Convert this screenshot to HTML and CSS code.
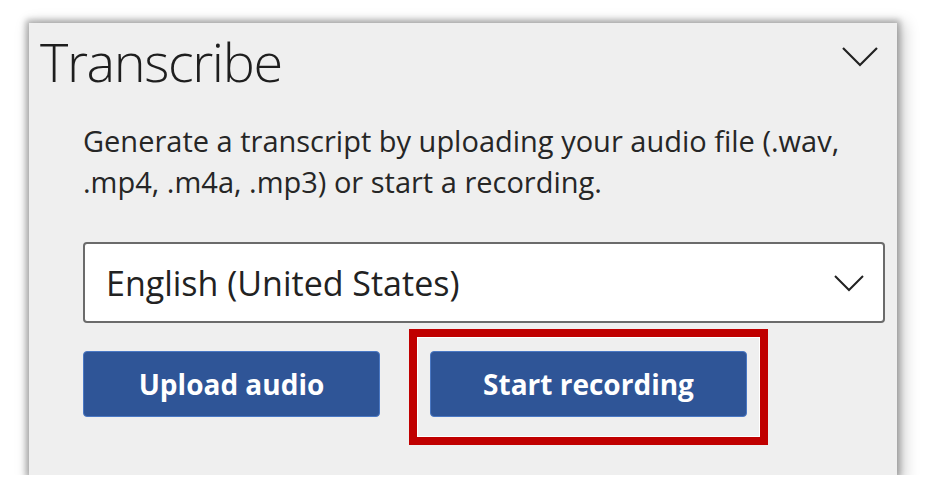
FILE: index.html
```html
<!DOCTYPE html>
<html lang="en">
<head>
<meta charset="utf-8">
<title>Transcribe</title>
<link rel="stylesheet" href="styles.css">
</head>
<body>
<div class="panel">
  <div class="header">
    <h1 class="title">Transcribe</h1>
    <svg class="collapse" width="38" height="22" viewBox="0 0 38 22"><path d="M2 2 L19 19 L36 2" fill="none" stroke="#222" stroke-width="2.2"/></svg>
  </div>
  <div class="content">
    <p class="desc">Generate a transcript by uploading your audio file (.wav, .mp4, .m4a, .mp3) or start a recording.</p>
    <div class="select">
      <span class="select-text">English (United States)</span>
      <svg class="select-chev" width="32" height="18" viewBox="0 0 32 18"><path d="M2 2 L16 16 L30 2" fill="none" stroke="#222" stroke-width="2"/></svg>
    </div>
    <div class="actions">
      <button class="btn btn-up">Upload audio</button>
      <div class="highlight">
        <button class="btn btn-rec">Start recording</button>
      </div>
    </div>
  </div>
</div>
</body>
</html>
```

FILE: styles.css
```css
html, body {
  margin: 0;
  padding: 0;
  background: #ffffff;
}
body {
  padding: 23px 0 0 29px;
  font-family: "Open Sans", "Noto Sans", sans-serif;
  color: #262626;
}
.panel {
  width: 868px;
  height: 452px;
  box-sizing: border-box;
  background: #efefef;
  box-shadow: 0 0 6px 3px rgba(0,0,0,0.28), 4px 4px 14px 4px rgba(0,0,0,0.18);
  padding: 0 0 0 11px;
}
.header {
  display: flex;
  justify-content: space-between;
  align-items: flex-start;
  height: 93px;
}
.title {
  margin: 0;
  font-weight: 300;
  font-size: 54px;
  line-height: 76px;
  letter-spacing: -1.4px;
  color: #1e1e1e;
}
.collapse {
  margin: 23px 18px 0 0;
}
.content {
  padding: 0 12px 0 43px;
}
.desc {
  margin: 0;
  padding-top: 4px;
  font-size: 29px;
  line-height: 41px;
  color: #262626;
  width: 790px;
}
.select {
  margin-top: 40px;
  height: 81px;
  box-sizing: border-box;
  border: 2px solid #6b6b6b;
  border-radius: 4px;
  background: #ffffff;
  display: flex;
  align-items: center;
  justify-content: space-between;
  padding: 0 18px 0 21px;
}
.select-text {
  font-size: 34px;
  color: #222;
}
.actions {
  display: flex;
  align-items: flex-start;
  margin-top: 6px;
}
.btn {
  height: 66px;
  box-sizing: border-box;
  background: #2f5597;
  border: 1px solid #4a78c4;
  border-radius: 4px;
  color: #ffffff;
  font-family: "Open Sans", "Noto Sans", sans-serif;
  font-weight: 700;
  font-size: 28px;
  padding: 0;
}
.btn-up {
  width: 297px;
  margin-top: 22px;
}
.highlight {
  margin-left: 29px;
  border: 8px solid #c00000;
  box-shadow: inset 0 0 0 1px #ffffff;
  padding: 14px 13px 20px 13px;
}
.btn-rec {
  width: 317px;
  display: block;
}
```
